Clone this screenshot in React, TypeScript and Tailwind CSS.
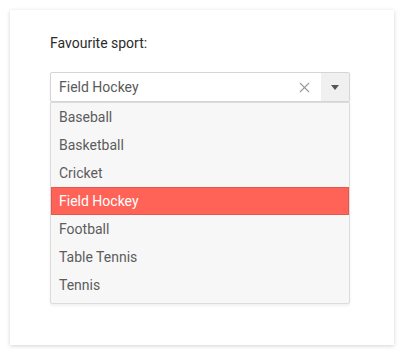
import { X } from "lucide-react";

const sports = ["Baseball", "Basketball", "Cricket", "Field Hockey", "Football", "Table Tennis", "Tennis"];

export default function App() {
  const selected = "Field Hockey";
  return (
    <div className="w-[404px] h-[357px] bg-white pt-[10px] px-[10px]" style={{ fontFamily: "Roboto, 'Liberation Sans', sans-serif" }}>
      <div className="h-[335px] bg-white shadow-[0_1px_4px_rgba(0,0,0,0.18)] pt-[23px] px-[40px]">
        <label className="block text-[14px] leading-[20px] text-[#2b2b2b]">Favourite sport:</label>
        <div className="mt-[19px] w-[300px]">
          <div className="flex h-[30px] border border-[#d5d5d5] rounded-[2px] bg-white shadow-[0_1px_2px_rgba(0,0,0,0.08)]">
            <span className="flex-1 pl-[8px] text-[14px] leading-[28px] text-[#5a5a5a]">{selected}</span>
            <span className="w-[34px] flex items-center justify-center text-[#9a9a9a]">
              <X size={17} strokeWidth={1.6} />
            </span>
            <span className="w-[28px] flex items-center justify-center bg-[#f0f0f0]">
              <svg width="8" height="5" viewBox="0 0 8 5"><path d="M0 0h8L4 5z" fill="#555" /></svg>
            </span>
          </div>
          <ul className="border border-[#dcdcdc] rounded-b-[2px] bg-[#f7f7f7] pb-[4px] shadow-[0_2px_3px_rgba(0,0,0,0.06)]">
            {sports.map((s) => (
              <li
                key={s}
                className={
                  s === selected
                    ? "h-[28px] pl-[7px] text-[14px] leading-[26px] text-white bg-[#ff6358] border border-[#e3574d]"
                    : "h-[28px] pl-[8px] text-[14px] leading-[28px] text-[#5c5c5c]"
                }
              >
                {s}
              </li>
            ))}
          </ul>
        </div>
      </div>
    </div>
  );
}
